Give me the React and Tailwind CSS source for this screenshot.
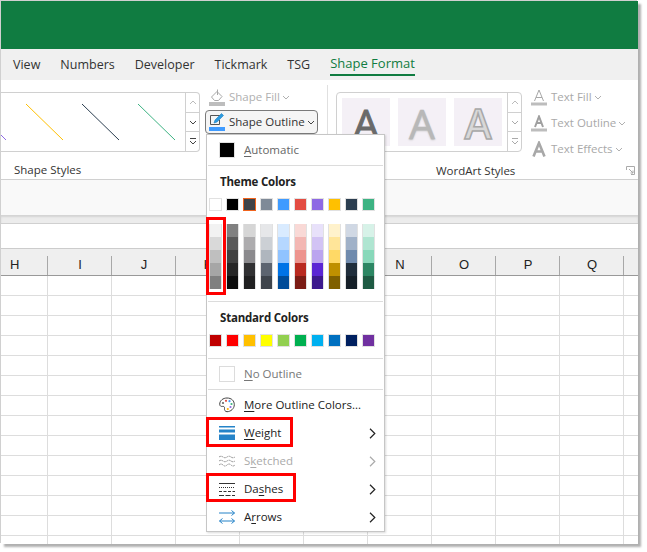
import React from "react";

const FONT = "font-['Open_Sans','Noto_Sans',sans-serif]";
const themeBase = ["#ffffff","#000000","#3f4349","#7f8a98","#3f9bff","#e34c42","#8e69e4","#ffc000","#2b3e50","#3db383"];
const shades = [
  ["#f2f2f2","#d9d9d9","#bfbfbf","#a6a6a6","#808080"],
  ["#808080","#595959","#404040","#262626","#0d0d0d"],
  ["#d6d6d6","#adacae","#8b8a8d","#313133","#202021"],
  ["#e6e7e9","#ccd0d5","#afb6be","#5c6470","#3e444c"],
  ["#d9ebff","#b5d7ff","#90c3ff","#0073e6","#004c99"],
  ["#f9d9d6","#f3b7b3","#ed948e","#b92a20","#7b1c15"],
  ["#e8e1fa","#d2c3f4","#bba5ef","#5a26d4","#3c198d"],
  ["#fff2cc","#ffe599","#ffd966","#bf9000","#7f6000"],
  ["#d0d8e4","#a0b1c8","#6f8aad","#202e3c","#151f28"],
  ["#d7f2e8","#afe5d1","#88d8ba","#2c8663","#1e5a43"],
];
const standard = ["#c00000","#ff0000","#ffc000","#ffff00","#92d050","#00b050","#00b0f0","#0070c0","#002060","#7030a0"];
const cols = ["I","J","K","L","M","N","O","P","Q"];

const Caret = ({ color = "#444" }) => (
  <svg width="8" height="5" viewBox="0 0 8 5" className="ml-[2px]"><path d="M1 1l3 3 3-3" fill="none" stroke={color} strokeWidth="1" /></svg>
);
const Chevron = ({ color = "#222" }) => (
  <svg width="7" height="11" viewBox="0 0 7 11"><path d="M1 .8l4.800 4.700L1 10.200" fill="none" stroke={color} strokeWidth="1.200" /></svg>
);

function ScrollButtons({ color }) {
  return (
    <div className="w-[14px] flex flex-col border-l border-[#d0d0d0]">
      <div className="flex-1 flex items-center justify-center border-b border-[#d0d0d0]">
        <svg width="8" height="5" viewBox="0 0 8 5"><path d="M1 4l3-3 3 3" fill="none" stroke="#bbb" /></svg>
      </div>
      <div className="flex-1 flex items-center justify-center border-b border-[#d0d0d0]">
        <svg width="8" height="5" viewBox="0 0 8 5"><path d="M1 1l3 3 3-3" fill="none" stroke={color} /></svg>
      </div>
      <div className="flex-1 flex items-center justify-center">
        <svg width="8" height="8" viewBox="0 0 8 8"><path d="M1 .5h6M1 3l3 3 3-3" fill="none" stroke={color} /></svg>
      </div>
    </div>
  );
}

const TextAIcon = ({ variant }) => (
  <svg width="16" height="17" viewBox="0 0 16 17" className="mr-[4px]">
    {variant === "fill" && <path d="M3.500 12L8 1 12.500 12M5 8.500h6" fill="none" stroke="#a8a8a8" />}
    {variant === "outline" && <path d="M4 12L8 1.500 12 12M5.500 8h5" fill="none" stroke="#a0a0a0" strokeWidth="2" />}
    {variant === "effects" && <path d="M2.500 15.500L8 2 13.500 15.500M5 10.500h6" fill="none" stroke="#a8a8a8" strokeWidth="2.600" />}
    {variant !== "effects" && <rect y="13.500" width="16" height="3" fill="#bdbdbd" />}
  </svg>
);

function TextButton({ icon, label }) {
  return (
    <div className="h-[26px] flex items-center text-[#a9a9a9]">
      <TextAIcon variant={icon} />
      <span>{label}</span>
      <Caret color="#b0b0b0" />
    </div>
  );
}

function MenuRow({ icon, label, arrow, cls = "text-[#222]", arrowColor }) {
  return (
    <div className={`h-[28px] flex items-center pl-[12px] pr-[8px] ${cls}`}>
      <div className="w-[16px] flex justify-center">{icon}</div>
      <span className="ml-[9px] flex-1">{label}</span>
      {arrow && <Chevron color={arrowColor} />}
    </div>
  );
}

const Sep = () => <div className="h-px mx-px bg-[#dcdcdc]" />;
const Swatch = ({ c, cls = "border-[#e1e1e1]" }) => (
  <div className={`w-[13px] h-[13px] border ${cls}`} style={{ backgroundColor: c }} />
);
const RedBox = ({ cls }) => <div className={`absolute border-[3px] border-[#ff0000] pointer-events-none ${cls}`} />;

function Menu() {
  return (
    <div className="absolute left-[205px] top-[133px] w-[179px] h-[398px] bg-white border border-[#c6c6c6] shadow-[1px_1px_2px_rgba(0,0,0,0.15)] z-10 text-[11.5px]">
      <div className="h-[30px] flex items-center pl-[12px] text-[#666]">
        <div className="w-[16px] h-[16px] bg-black border border-[#e1e1e1]" />
        <span className="ml-[9px]"><u className="underline-offset-2">A</u>utomatic</span>
      </div>
      <Sep />
      <div className="h-[32px] flex items-center pl-[13px] font-bold tracking-[-0.2px] text-[#222]">Theme Colors</div>
      <div className="flex gap-[4px] pl-[2px]">
        {themeBase.map((c, i) => (
          <Swatch key={c} c={c} cls={i === 2 ? "border-[#f0641e]" : "border-[#e1e1e1]"} />
        ))}
      </div>
      <div className="flex gap-[4px] pl-[2px] mt-[13px]">
        {shades.map((col, i) => (
          <div key={i} className="w-[13px] flex flex-col border-x border-[#e1e1e1]">
            {col.map((c) => <div key={c} className="h-[13px]" style={{ backgroundColor: c }} />)}
          </div>
        ))}
      </div>
      <div className="h-[12px]" />
      <Sep />
      <div className="h-[32px] flex items-center pl-[13px] font-bold tracking-[-0.2px] text-[#222]">Standard Colors</div>
      <div className="flex gap-[4px] pl-[2px]">
        {standard.map((c) => <Swatch key={c} c={c} />)}
      </div>
      <div className="h-[11px]" />
      <Sep />
      <div className="h-[30px] flex items-center pl-[12px] text-[#777]">
        <div className="w-[16px] h-[16px] bg-white border border-[#dcdcdc]" />
        <span className="ml-[9px]"><u className="underline-offset-2">N</u>o Outline</span>
      </div>
      <Sep />
      <div className="pt-px">
        <MenuRow
          label={<><u className="underline-offset-2">M</u>ore Outline Colors...</>}
          icon={
            <svg width="16" height="16" viewBox="0 0 16 16">
              <path d="M8 1C4 1 .7 3.600.7 7.200c0 2 1.600 2.400 2.800 2.200 1.300-.2 2.300.5 2 2-.3 1.500.6 3.300 2.500 3.300 3.700 0 7.300-3 7.300-7S12.500 1 8 1z" fill="none" stroke="#444" />
              <circle cx="4" cy="6" r="1.100" fill="#666" />
              <circle cx="7" cy="3.800" r="1.100" fill="#e34c42" />
              <circle cx="10.500" cy="4.200" r="1.100" fill="#3f9bff" />
              <circle cx="12.500" cy="7" r="1.100" fill="#3db383" />
              <circle cx="11.500" cy="10" r="1.100" fill="#8e69e4" />
              <circle cx="8.800" cy="12" r="1.100" fill="#ffb000" />
            </svg>
          }
        />
        <MenuRow
          label={<><u className="underline-offset-2">W</u>eight</>}
          arrow
          icon={
            <svg width="16" height="14" viewBox="0 0 16 14">
              <rect y="0" width="16" height="1.500" fill="#2583c8" />
              <rect y="3.500" width="16" height="3" fill="#2583c8" />
              <rect y="8.500" width="16" height="5.500" fill="#2583c8" />
            </svg>
          }
        />
        <MenuRow
          label={<>S<u className="underline-offset-2">k</u>etched</>}
          arrow
          arrowColor="#aaa"
          cls="text-[#aaa]"
          icon={
            <svg width="16" height="12" viewBox="0 0 16 12">
              <path d="M0 2q2-1.500 4 0t4 0 4 0 4 0M0 6q2-1.500 4 0t4 0 4 0 4 0M0 10q2-2 4 0t4 0 4 0 4 0" fill="none" stroke="#999" strokeDasharray="2 .6" />
            </svg>
          }
        />
        <MenuRow
          label={<>Da<u className="underline-offset-2">s</u>hes</>}
          arrow
          icon={
            <svg width="16" height="13" viewBox="0 0 16 13">
              <path d="M0 .5h16" stroke="#333" />
              <path d="M0 4.500h16" stroke="#333" strokeDasharray="1 1" />
              <path d="M0 8.500h16" stroke="#333" strokeDasharray="3 1.500" />
              <path d="M0 12.500h16" stroke="#333" strokeDasharray="5 1.500" />
            </svg>
          }
        />
        <MenuRow
          label={<>A<u className="underline-offset-2">r</u>rows</>}
          arrow
          icon={
            <svg width="16" height="14" viewBox="0 0 16 14">
              <path d="M0 3h15.500M12.500 .5l3 2.500-3 2.500" fill="none" stroke="#2583c8" />
              <path d="M.5 11h15M3.500 8.500l-3 2.500 3 2.500M12.500 8.500l3 2.500-3 2.500" fill="none" stroke="#2583c8" />
            </svg>
          }
        />
      </div>
      <RedBox cls="-left-px top-[82px] w-[20px] h-[78px]" />
      <RedBox cls="-left-px top-[282px] w-[87px] h-[30px]" />
      <RedBox cls="-left-px top-[338px] w-[90px] h-[29px]" />
    </div>
  );
}

export default function App() {
  return (
    <div className={`w-[647px] h-[552px] bg-white pl-px pt-px overflow-hidden ${FONT}`}>
      <div className="relative w-[637px] h-[543px] flex flex-col bg-white shadow-[3px_3px_2px_#b0b0b0,-1px_-1px_0_#d0d0d0]">
        <div className="h-[48px] bg-[#107c41]" />

        <div className="h-[31px] bg-[#f0f0f0] flex gap-[20px] pl-[12px] text-[12.5px] text-[#333]">
          {["View","Numbers","Developer","Tickmark","TSG"].map((t) => (
            <div key={t} className="h-[27px] flex items-center pt-[5px]">{t}</div>
          ))}
          <div className="h-[27px] flex items-center pt-[5px] text-[13px] font-medium text-[#107c41] border-b-2 border-[#107c41]">Shape Format</div>
        </div>

        <div className="h-[100px] shrink-0 flex bg-white border-b border-[#d0d0d0] text-[11.5px]">
          <div className="w-[326px] flex flex-col">
            <div className="flex">
              <div className="mt-[12px] w-[199px] h-[60px] flex border-y border-r border-[#d0d0d0] rounded-r-[4px]">
                <svg width="184" height="58" viewBox="0 0 184 58" className="flex-1">
                  <path d="M-2 40L5 47" stroke="#8e69e4" strokeWidth="1" />
                  <path d="M25 11L62 47" stroke="#ffc000" strokeWidth="1" />
                  <path d="M81 11L118 47" stroke="#2b3e50" strokeWidth="1" />
                  <path d="M137 11L174 47" stroke="#3db383" strokeWidth="1" />
                </svg>
                <ScrollButtons color="#444" />
              </div>
              <div className="ml-[5px] pt-[6px]">
                <div className="h-[22px] flex items-center pl-[4px] text-[#b0b0b0]">
                  <svg width="16" height="17" viewBox="0 0 16 17" className="mr-[4px]">
                    <path d="M2.500 8L8 2.500l5 5-3.500 4H5.500z" fill="none" stroke="#a8a8a8" />
                    <path d="M8.500 .5V6" stroke="#a8a8a8" />
                    <rect y="13" width="16" height="4" fill="#bdbdbd" />
                  </svg>
                  <span>Shape Fill</span>
                  <Caret color="#b0b0b0" />
                </div>
                <div className="mt-[2px] w-[113px] h-[24px] flex items-center pl-[3px] border border-[#7a7a7a] rounded-[4px] bg-[#f5f5f5] text-[#333]">
                  <svg width="16" height="18" viewBox="0 0 16 18" className="mr-[4px] shrink-0">
                    <path d="M11 2.500H1.500v9h9V7" fill="none" stroke="#555" />
                    <path d="M5 10l1-3 6.500-6.500 2 2L8 9z" fill="#2b9be0" stroke="#1f7fc0" strokeWidth=".6" />
                    <rect y="14" width="16" height="4" fill="#3f9bff" />
                  </svg>
                  <span className="whitespace-nowrap">Shape Outline</span>
                  <Caret />
                </div>
              </div>
            </div>
            <div className="mt-auto h-[18px] pl-[13px] flex items-center text-[#333]">Shape Styles</div>
          </div>

          <div className="w-px h-[80px] mt-[5px] bg-[#e0e0e0]" />

          <div className="flex-1 flex flex-col pl-[8px]">
            <div className="flex">
              <div className="mt-[12px] w-[186px] h-[60px] flex border border-[#d0d0d0] rounded-[4px]">
                <div className="flex-1 flex gap-[8px] pl-[5px] items-center">
                  <div className="w-[48px] h-[48px] flex items-center justify-center pt-[2px] bg-[#f4f0f6] text-[41px] leading-none text-[#6a6a6a] [-webkit-text-stroke:1px_#6a6a6a]">A</div>
                  <div className="w-[48px] h-[48px] flex items-center justify-center pt-[2px] bg-[#f4f0f6] text-[41px] leading-none text-[#b8b8b8] [-webkit-text-stroke:0.5px_#b8b8b8] [text-shadow:0_1px_2px_#bbb]">A</div>
                  <div className="w-[48px] h-[48px] flex items-center justify-center pt-[2px] bg-[#f4f0f6] text-[41px] leading-none font-semibold text-[#d8d8d8] [-webkit-text-stroke:1.5px_#a8a8a8]">A</div>
                </div>
                <ScrollButtons color="#aaa" />
              </div>
              <div className="ml-[9px] pt-[4px]">
                <TextButton icon="fill" label="Text Fill" />
                <TextButton icon="outline" label="Text Outline" />
                <TextButton icon="effects" label="Text Effects" />
              </div>
            </div>
            <div className="mt-auto h-[18px] pl-[100px] pr-[3px] flex items-center justify-between text-[#333]">
              <span>WordArt Styles</span>
              <svg width="9" height="9" viewBox="0 0 9 9"><path d="M.5 4V.5H8.500V8.500H5M3 3l4 4M7 4.500V7H4.500" fill="none" stroke="#aaa" /></svg>
            </div>
          </div>
        </div>

        <div className="h-[35px] shrink-0 bg-[#f9f9f9]" />
        <div className="h-[9px] shrink-0 bg-[#ececec] border-b border-[#d0d0d0] shadow-[inset_0_2px_2px_#d4d4d4]" />
        <div className="h-[25px] shrink-0 bg-white border-b border-[#cccccc]" />

        <div className="h-[27px] shrink-0 flex bg-[#efefef] border-b border-[#999999] text-[13px] text-[#222] font-['Liberation_Sans',sans-serif]">
          <div className="w-[47px] flex items-center pl-[9px] pt-[5px] relative">
            H
            <div className="absolute right-0 top-[7px] bottom-0 w-px bg-[#a8a8a8]" />
          </div>
          {cols.map((c) => (
            <div key={c} className="w-[64px] flex items-center justify-center pt-[5px] relative">
              {c}
              <div className="absolute right-0 top-[7px] bottom-0 w-px bg-[#a8a8a8]" />
            </div>
          ))}
        </div>

        <div className="flex-1 overflow-hidden">
          {Array.from({ length: 14 }).map((_, r) => (
            <div key={r} className="h-[20px] flex border-b border-[#dddddd]">
              <div className="w-[47px] border-r border-[#dddddd]" />
              {cols.map((c) => <div key={c} className="w-[64px] border-r border-[#dddddd]" />)}
            </div>
          ))}
        </div>

        <Menu />
      </div>
    </div>
  );
}
